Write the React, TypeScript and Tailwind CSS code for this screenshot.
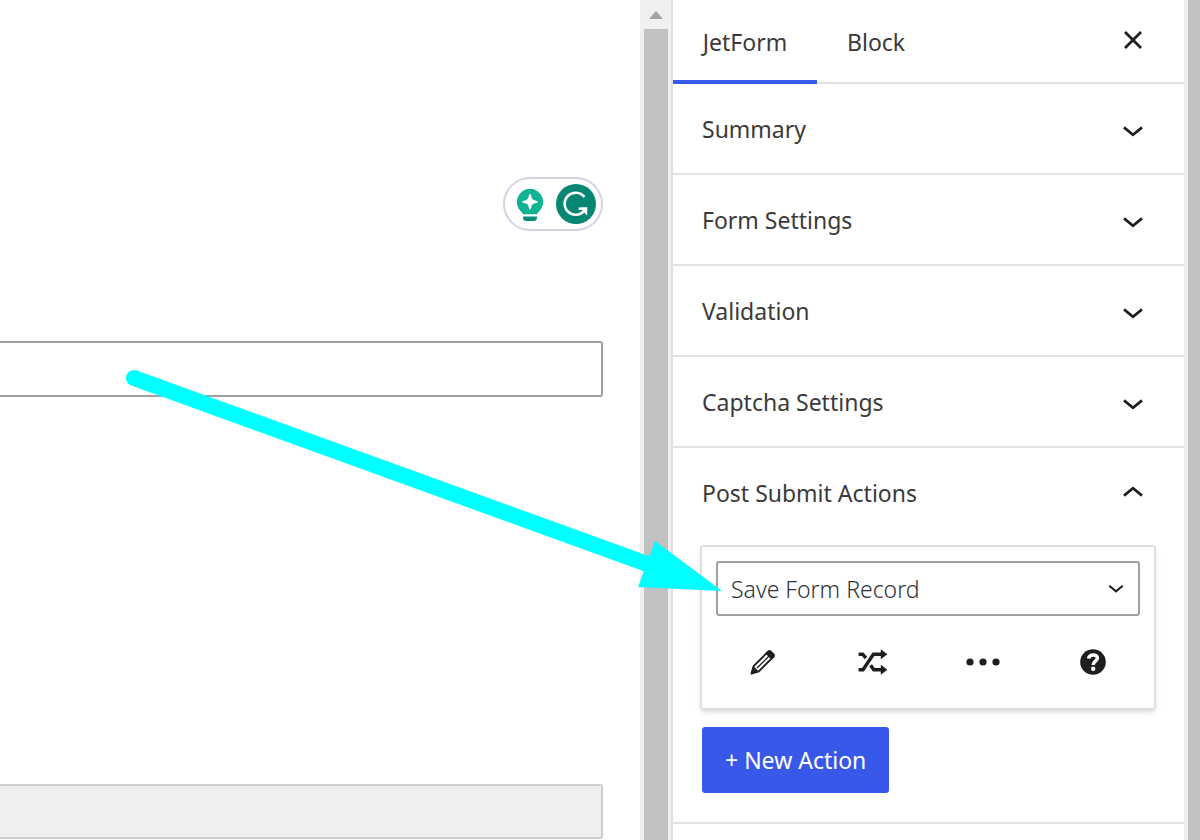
import { useState, type ReactNode } from "react";

function Chevron({ up = false, small = false }: { up?: boolean; small?: boolean }) {
  return (
    <svg
      viewBox="0 0 20 12"
      className={small ? "h-[9px] w-4" : "h-3 w-5"}
      fill="none"
      stroke="#1e1e1e"
      strokeWidth="2.7"
      aria-hidden="true"
    >
      <path d={up ? "M1 9.6 10 2.2 19 9.6" : "M1 2.4 10 9.8 19 2.4"} />
    </svg>
  );
}

function Panel({ title, children, initiallyOpen = false }: { title: string; children?: ReactNode; initiallyOpen?: boolean }) {
  const [open, setOpen] = useState(initiallyOpen);
  return (
    <section className="border-b-2 border-[#e2e2e2]">
      <h2>
        <button
          type="button"
          aria-expanded={open}
          onClick={() => setOpen(!open)}
          className="flex h-[89px] w-full items-center justify-between pr-[41px] pl-[29px] text-left"
        >
          <span>{title}</span>
          <span className={open ? "pb-0.5" : "pt-1"}>
            <Chevron up={open} />
          </span>
        </button>
      </h2>
      {open && children}
    </section>
  );
}

function PencilIcon() {
  return (
    <svg viewBox="0 0 28 28" className="size-7" aria-hidden="true">
      <path d="M2.5 25.5 4.6 18.2 17.6 5.2 22.8 10.4 9.8 23.4Z" fill="#fff" stroke="#1e1e1e" strokeWidth="1.9" strokeLinejoin="round" />
      <path d="M1.8 26.2 4.2 17.8 10.2 23.8Z" fill="#1e1e1e" />
      <path d="M16.2 5.2 18.8 2.6Q20.5 1.2 22.2 2.8L25.2 5.8Q26.8 7.5 25.4 9.2L22.8 11.8Z" fill="#1e1e1e" />
      <path d="M8 20 19.8 8.3" stroke="#1e1e1e" strokeWidth="1.3" />
    </svg>
  );
}

function ShuffleIcon() {
  return (
    <svg viewBox="0 0 30 26" className="h-[26px] w-[30px]" fill="none" stroke="#1e1e1e" strokeWidth="3.4" aria-hidden="true">
      <path d="M.6 5.2H4.6L8 9M.6 20.8H5L15.4 5.2H24M12.6 16.2 15.8 20.8H24" />
      <path d="M22.8.2 29.4 5.2 22.8 10.2ZM22.8 15.8 29.4 20.8 22.8 25.8Z" fill="#1e1e1e" stroke="none" />
    </svg>
  );
}

function DotsIcon() {
  return (
    <svg viewBox="0 0 34 8" className="h-2 w-[34px]" fill="#1e1e1e" aria-hidden="true">
      <circle cx="4" cy="4" r="3.6" />
      <circle cx="17" cy="4" r="3.6" />
      <circle cx="30" cy="4" r="3.6" />
    </svg>
  );
}

function HelpIcon() {
  return (
    <svg viewBox="0 0 26 26" className="size-[26px]" aria-hidden="true">
      <circle cx="13" cy="13" r="12.8" fill="#1e1e1e" />
      <path d="M8.6 9.6C8.8 4.8 17.6 4.9 17.4 9.2C17.3 12.2 13.2 12.1 13.2 16" fill="none" stroke="#fff" strokeWidth="3.5" />
      <circle cx="13.2" cy="19.8" r="2.2" fill="#fff" />
    </svg>
  );
}

function WritingAssistant() {
  return (
    <div className="flex h-[54px] w-[100px] items-center gap-3 rounded-full border-2 border-[#d2d5e3] bg-white pl-[11px]">
      <button type="button" aria-label="Suggestions">
        <svg viewBox="0 0 28 34" className="h-[34px] w-7" aria-hidden="true">
          <path d="M14 1.8a13.2 13.2 0 0 0-8.6 23.2c.7.6 1.3 1.2 1.6 2.2h14c.3-1 .9-1.6 1.6-2.2A13.2 13.2 0 0 0 14 1.8Z" fill="#0fb391" />
          <path d="M14 8C14.9 12.6 16 13.9 20.8 14.8 16 15.7 14.9 16.8 14 21.6 13.1 16.8 12 15.7 7.2 14.8 12 13.9 13.1 12.6 14 8Z" fill="#fff" stroke="#fff" strokeWidth="1.8" strokeLinejoin="round" />
          <path d="M7 29.6h14v1a3.4 3.4 0 0 1-3.4 3.4h-7.2A3.4 3.4 0 0 1 7 30.6Z" fill="#078b73" />
        </svg>
      </button>
      <button type="button" aria-label="Check writing">
        <svg viewBox="0 0 40 40" className="size-10" aria-hidden="true">
          <circle cx="20" cy="20" r="20" fill="#078773" />
          <path d="M28.4 13A11 11 0 1 0 29.4 24.8H22.6" fill="none" stroke="#fff" strokeWidth="2.6" />
          <path d="M24 23.5H31.2V31.6L28.3 28.8 26.4 26Z" fill="#fff" />
        </svg>
      </button>
    </div>
  );
}

export default function App() {
  return (
    <div className="relative flex h-screen min-h-0 overflow-hidden bg-white font-['Noto_Sans','Open_Sans',sans-serif] text-[23px] leading-8 text-[#3a3a3a]">
      <main className="flex min-w-0 flex-1 flex-col pt-[177px] pr-[37px]">
        <div className="flex justify-end">
          <WritingAssistant />
        </div>
        <input
          aria-label="Form field"
          className="mt-[110px] h-14 w-full shrink-0 rounded-r-[3px] border-2 border-l-0 border-[#a0a0a0] bg-white px-4 outline-none"
        />
        <input
          aria-label="Disabled form field"
          disabled
          className="mt-[387px] h-[55px] w-full shrink-0 rounded-r-[3px] border-2 border-l-0 border-[#cecece] bg-[#efefef] px-4"
        />
      </main>

      <div className="flex w-[31px] shrink-0 flex-col bg-[#f0f0f0] pr-[3px] pl-1" aria-hidden="true">
        <div className="flex h-[29px] shrink-0 items-center justify-center">
          <svg viewBox="0 0 14 8" className="h-2 w-[14px]">
            <path d="M7 0 14 8H0Z" fill="#a3a3a3" />
          </svg>
        </div>
        <div className="flex-1 bg-[#c1c1c1]" />
      </div>

      <aside className="w-[513px] shrink-0 border-l-2 border-[#e0e0e0]">
        <header className="flex h-[84px] items-start border-b-2 border-[#e2e2e2]">
          <button type="button" className="h-[84px] w-36 border-b-4 border-[#3858e9] pt-1">JetForm</button>
          <button type="button" className="h-[84px] px-[30px]">Block</button>
          <button type="button" aria-label="Close settings" className="mr-[41px] ml-auto flex h-20 w-5 items-center justify-center">
            <svg viewBox="0 0 18 18" className="size-[18px]" fill="none" stroke="#1e1e1e" strokeWidth="2.8" aria-hidden="true">
              <path d="M1 1 17 17M17 1 1 17" />
            </svg>
          </button>
        </header>
        <Panel title="Summary" />
        <Panel title="Form Settings" />
        <Panel title="Validation" />
        <Panel title="Captcha Settings" />
        <Panel title="Post Submit Actions" initiallyOpen>
          <div className="px-[27px] pt-2 pb-[29px]">
            <div className="mr-px rounded-[3px] border-2 border-[#dfdfdf] px-[14px] pt-[14px] pb-8 shadow-md">
              <div className="grid items-center">
                <select
                  aria-label="Action type"
                  className="col-start-1 row-start-1 h-[55px] w-full appearance-none rounded-[3px] border-2 border-[#a0a0a0] bg-white px-[13px] font-light text-[#2c3338] outline-none"
                >
                  <option>Save Form Record</option>
                </select>
                <span className="pointer-events-none col-start-1 row-start-1 mr-4 justify-self-end">
                  <Chevron small />
                </span>
              </div>
              <div className="-mx-2 mt-8 grid grid-cols-4">
                <button type="button" aria-label="Edit action" className="flex h-7 items-center justify-center"><PencilIcon /></button>
                <button type="button" aria-label="Conditions" className="flex h-7 items-center justify-center"><ShuffleIcon /></button>
                <button type="button" aria-label="More options" className="flex h-7 items-center justify-center"><DotsIcon /></button>
                <button type="button" aria-label="Help" className="flex h-7 items-center justify-center"><HelpIcon /></button>
              </div>
            </div>
            <button type="button" className="mt-[17px] ml-0.5 h-[66px] rounded-[3px] bg-[#3858e9] px-[23px] text-white">
              + New Action
            </button>
          </div>
        </Panel>
      </aside>

      <div className="w-4 shrink-0 border-l-4 border-[#f0f0f0] bg-[#c1c1c1]" aria-hidden="true" />

      <svg viewBox="0 0 600 220" className="pointer-events-none absolute top-[370px] right-[475px] h-[220px] w-[600px] overflow-visible" aria-hidden="true">
        <path d="M9 8 525 195" stroke="#00ffff" strokeWidth="16" strokeLinecap="round" />
        <path d="M530 171 597 221 513 217Z" fill="#00ffff" />
      </svg>
    </div>
  );
}
